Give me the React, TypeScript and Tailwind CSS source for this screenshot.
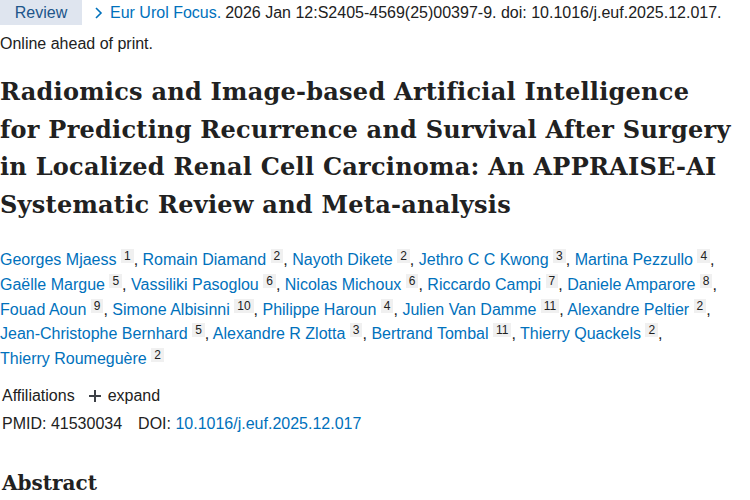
import React from 'react';

const authors: [string, string][] = [
  ['Georges Mjaess', '1'],
  ['Romain Diamand', '2'],
  ['Nayoth Dikete', '2'],
  ['Jethro C C Kwong', '3'],
  ['Martina Pezzullo', '4'],
  ['Gaëlle Margue', '5'],
  ['Vassiliki Pasoglou', '6'],
  ['Nicolas Michoux', '6'],
  ['Riccardo Campi', '7'],
  ['Daniele Amparore', '8'],
  ['Fouad Aoun', '9'],
  ['Simone Albisinni', '10'],
  ['Philippe Haroun', '4'],
  ['Julien Van Damme', '11'],
  ['Alexandre Peltier', '2'],
  ['Jean-Christophe Bernhard', '5'],
  ['Alexandre R Zlotta', '3'],
  ['Bertrand Tombal', '11'],
  ['Thierry Quackels', '2'],
  ['Thierry Roumeguère', '2'],
];

const App: React.FC = () => {
  return (
    <div className="w-[750px] h-[500px] overflow-hidden bg-white text-[#212121] font-['Liberation_Sans',sans-serif] text-[16px]">
      {/* Top row: badge + citation */}
      <div className="flex items-center h-[25px] whitespace-nowrap">
        <span className="flex items-center justify-center h-[25px] w-[82px] bg-[#dfe5ef] text-[#20558a]">Review</span>
        <span className="ml-[12px] flex items-center">
          <svg className="w-[9px] h-[12px] mr-[7px]" viewBox="0 0 9 12" fill="none" stroke="#0071bc" strokeWidth={1.6}>
            <path d="M2 1l5 5-5 5" />
          </svg>
          <span className="text-[#0071bc]">Eur Urol Focus.</span>
          <span className="ml-[4px]">2026 Jan 12:S2405-4569(25)00397-9. doi: 10.1016/j.euf.2025.12.017.</span>
        </span>
      </div>
      <div className="mt-[7px] leading-[24px]">Online ahead of print.</div>

      {/* Title */}
      <h1 className="mt-[17px] font-['DejaVu_Serif',serif] font-bold text-[24px] leading-[37.5px] tracking-[0.25px] text-[#212121] whitespace-nowrap">
        Radiomics and Image-based Artificial Intelligence<br />
        for Predicting Recurrence and Survival After Surgery<br />
        in Localized Renal Cell Carcinoma: An APPRAISE-AI<br />
        Systematic Review and Meta-analysis
      </h1>

      {/* Authors */}
      <div className="mt-[25px] leading-[24.8px] pr-[8px]">
        {authors.map(([name, sup], i) => (
          <React.Fragment key={name + i}>
            <span className="whitespace-nowrap">
              <span className="text-[#0071bc]">{name}</span>
              {' '}
              <span className="inline-block align-[5px] bg-[#f0f0f0] px-[3px] text-[12px] leading-[14px] text-[#212121]">{sup}</span>
              {i < authors.length - 1 ? ',' : ''}
            </span>
            {i < authors.length - 1 ? ' ' : ''}
          </React.Fragment>
        ))}
      </div>

      {/* Affiliations / IDs */}
      <div className="mt-[11px] leading-[26px]">
        <div className="flex items-center">
          <span className="ml-[2px]">Affiliations</span>
          <span className="ml-[14px] flex items-center">
            <svg className="w-[12px] h-[12px] mr-[7px]" viewBox="0 0 12 12" stroke="#3d4147" strokeWidth={2}>
              <path d="M6 0v12M0 6h12" />
            </svg>
            expand
          </span>
        </div>
        <div className="mt-[2px] pl-[2px]">
          <span>PMID: 41530034</span>
          <span className="ml-[16px]">DOI: </span>
          <span className="text-[#0071bc]">10.1016/j.euf.2025.12.017</span>
        </div>
      </div>

      {/* Abstract heading */}
      <h2 className="mt-[32px] pl-[2px] font-['DejaVu_Serif',serif] font-bold text-[20px] leading-[28px]">Abstract</h2>
    </div>
  );
};

export default App;
